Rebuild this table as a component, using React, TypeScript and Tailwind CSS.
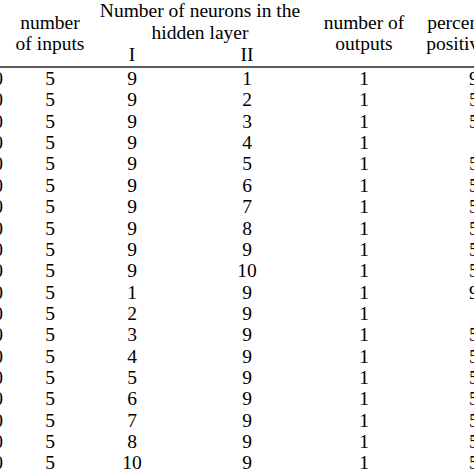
import React from "react"

type Row = { inputs: string; first: string; second: string; outputs: string; percent: string }

const firstLayer = ["9", "9", "9", "9", "9", "9", "9", "9", "9", "9", "1", "2", "3", "4", "5", "6", "7", "8", "10"]
const secondLayer = ["1", "2", "3", "4", "5", "6", "7", "8", "9", "10", "9", "9", "9", "9", "9", "9", "9", "9", "9"]
const percents = ["95.4", "55.2", "55.8", "", "55.1", "55.6", "55.3", "55.9", "55.0", "55.7", "95.1", "", "55.4", "55.2", "55.8", "55.6", "55.3", "55.5", "55.1"]

const rows: Row[] = firstLayer.map((first, i) => ({
    inputs: "5",
    first,
    second: secondLayer[i],
    outputs: "1",
    percent: percents[i],
}))

const App = () => {
    return (
        <div className="w-[474px] h-[474px] overflow-hidden bg-white text-black font-['Liberation_Serif','Times_New_Roman',serif] text-[19.5px] leading-[21.5px]">
            {/* header */}
            <div className="flex flex-row h-[66px] whitespace-nowrap">
                <div className="w-[100px] shrink-0 flex flex-col items-center justify-center">
                    <div>number</div>
                    <div>of inputs</div>
                </div>
                <div className="w-[200px] shrink-0 flex flex-col items-center">
                    <div>Number of neurons in the</div>
                    <div>hidden layer</div>
                    <div className="flex flex-row self-start mt-[1px]">
                        <div className="w-[64px] shrink-0 text-center">I</div>
                        <div className="w-[166px] shrink-0 text-center">II</div>
                    </div>
                </div>
                <div className="w-[128px] shrink-0 flex flex-col items-center justify-center">
                    <div>number of</div>
                    <div>outputs</div>
                </div>
                <div className="w-[104px] shrink-0 flex flex-col items-center justify-center">
                    <div>percentage of</div>
                    <div>positive cases</div>
                </div>
            </div>
            <div className="h-[2px] bg-[#5c5c5c]" />

            {/* body */}
            <div className="flex flex-col">
                {rows.map((row, i) => (
                    <div key={i} className="flex flex-row h-[21.36px] leading-[21.36px] whitespace-nowrap">
                        <div className="w-[23px] -ml-[20px] shrink-0 text-right">0</div>
                        <div className="w-[94px] shrink-0 text-center">{row.inputs}</div>
                        <div className="w-[70px] shrink-0 text-center">{row.first}</div>
                        <div className="w-[160px] shrink-0 text-center">{row.second}</div>
                        <div className="w-[74px] shrink-0 text-center">{row.outputs}</div>
                        <div className="shrink-0 pl-[68px]">{row.percent}</div>
                    </div>
                ))}
            </div>
        </div>
    )
}

export default App
